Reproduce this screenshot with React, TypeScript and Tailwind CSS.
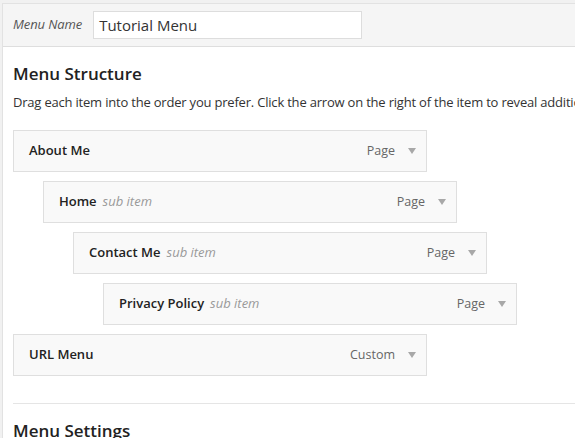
import React from "react";

type Item = { title: string; type: string; depth: number; sub?: boolean };

const items: Item[] = [
  { title: "About Me", type: "Page", depth: 0 },
  { title: "Home", type: "Page", depth: 1, sub: true },
  { title: "Contact Me", type: "Page", depth: 2, sub: true },
  { title: "Privacy Policy", type: "Page", depth: 3, sub: true },
  { title: "URL Menu", type: "Custom", depth: 0 },
];

const indent = ["ml-0", "ml-[30px]", "ml-[60px]", "ml-[90px]"];

function Arrow() {
  return (
    <svg width="8" height="6" viewBox="0 0 8 6" className="ml-[13px]">
      <path d="M0 0 L8 0 L4 6 Z" fill="#a8a8a8" />
    </svg>
  );
}

export default function App() {
  return (
    <div
      className="w-[575px] h-[438px] overflow-hidden bg-[#f1f1f1] pl-[2px] pt-[3px]"
      style={{ fontFamily: '"Open Sans", "Liberation Sans", sans-serif' }}
    >
      <div className="h-full border-l border-t border-[#e2e2e2] bg-white">
        <div className="h-[43px] flex items-center bg-[#f5f5f5] border-b border-[#dedede] pl-[10px]">
          <span className="italic text-[13px] tracking-[-0.1px] text-[#555]">Menu Name</span>
          <div className="ml-[11px] w-[269px] h-[28px] bg-white border border-[#dddddd] flex items-center pl-[5px] text-[15px] text-[#333]">
            Tutorial Menu
          </div>
        </div>
        <div className="pl-[10px]">
          <h3 className="mt-[15px] text-[17px] leading-[23px] font-semibold text-[#222]">
            Menu Structure
          </h3>
          <p className="mt-[8px] text-[13px] leading-[18px] tracking-[-0.2px] text-[#333] whitespace-nowrap">
            Drag each item into the order you prefer. Click the arrow on the right of the item to reveal additional configuration options.
          </p>
          <div className="mt-[19px] flex flex-col gap-[9px]">
            {items.map((it) => (
              <div
                key={it.title}
                className={`${indent[it.depth]} w-[414px] h-[42px] border border-[#dfdfdf] bg-[#f9f9f9] flex items-center pl-[15px] pr-[10px]`}
              >
                <span className="text-[13px] font-semibold text-[#222]">{it.title}</span>
                {it.sub && (
                  <span className="ml-[6px] text-[13px] italic text-[#999]">sub item</span>
                )}
                <span className="ml-auto text-[12.5px] text-[#666]">{it.type}</span>
                <Arrow />
              </div>
            ))}
          </div>
          <div className="mt-[27px] border-t border-[#e5e5e5]" />
          <h3 className="mt-[15px] text-[17px] leading-[23px] font-semibold text-[#222]">
            Menu Settings
          </h3>
        </div>
      </div>
    </div>
  );
}
